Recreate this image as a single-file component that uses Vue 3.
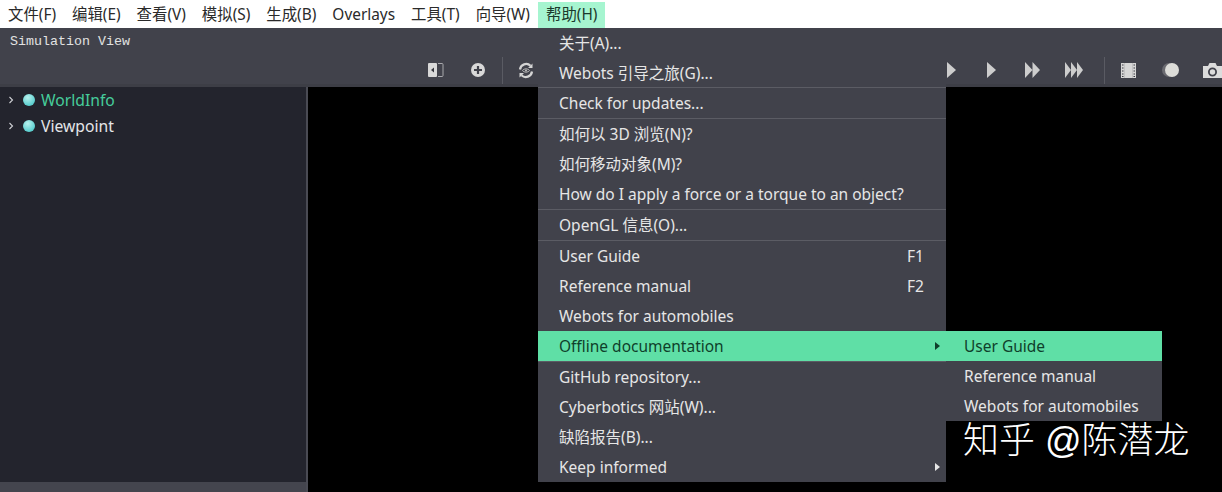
<script setup>
const menus = [
  { t: '文件(F)' }, { t: '编辑(E)' }, { t: '查看(V)' }, { t: '模拟(S)' }, { t: '生成(B)' },
  { t: 'Overlays' }, { t: '工具(T)' }, { t: '向导(W)' }, { t: '帮助(H)', active: true }
]
const groups = [
  [{ t: '关于(A)...' }, { t: 'Webots 引导之旅(G)...' }],
  [{ t: 'Check for updates...' }],
  [{ t: '如何以 3D 浏览(N)?' }, { t: '如何移动对象(M)?' }, { t: 'How do I apply a force or a torque to an object?' }],
  [{ t: 'OpenGL 信息(O)...' }],
  [
    { t: 'User Guide', k: 'F1' }, { t: 'Reference manual', k: 'F2' }, { t: 'Webots for automobiles' },
    { t: 'Offline documentation', sub: true, hl: true }
  ],
  [{ t: 'GitHub repository...' }, { t: 'Cyberbotics 网站(W)...' }, { t: '缺陷报告(B)...' }, { t: 'Keep informed', sub: true }]
]
const tree = [{ t: 'WorldInfo', on: true }, { t: 'Viewpoint' }]
const subs = [{ t: 'User Guide', hl: true }, { t: 'Reference manual' }, { t: 'Webots for automobiles' }]
</script>

<template>
  <div class="app">
    <nav class="menubar">
      <span v-for="m in menus" :key="m.t" class="mb" :class="{ active: m.active }">{{ m.t }}</span>
    </nav>
    <header class="head">
      <div class="title">Simulation View</div>
      <div class="tools">
        <svg class="ic i-panel" viewBox="0 0 16 16"><rect x="0" y="1" width="9" height="14" rx="1" fill="#d8d8d8"/><path d="M10 1.500h4a1 1 0 0 1 1 1v11a1 1 0 0 1-1 1h-4" fill="none" stroke="#a9a9ad" stroke-width="1"/><path d="M6 5.500L3 8l3 2.500z" fill="#33343b"/></svg>
        <svg class="ic i-plus" viewBox="0 0 14 14"><circle cx="7" cy="7" r="7" fill="#d8d8d8"/><path d="M7 3v8M3 7h8" stroke="#41424b" stroke-width="2.200"/></svg>
        <i class="div d-left"></i>
        <svg class="ic i-reload" viewBox="0 0 16 17"><path d="M2 7.500A6.200 6.200 0 0 1 12.500 3.800" fill="none" stroke="#d4d4d4" stroke-width="2.200"/><path d="M14 9.500A6.200 6.200 0 0 1 3.500 13.200" fill="none" stroke="#d4d4d4" stroke-width="2.200"/><path d="M14.500 1.500v4.500H10zM1.500 15.500V11H6z" fill="#d4d4d4"/><path d="M4.500 8.500C6 6.300 10 6.300 11.500 8.500 10 10.700 6 10.700 4.500 8.500z" fill="none" stroke="#b8b8b8" stroke-width="1"/><circle cx="8" cy="8.500" r="1.100" fill="#b8b8b8"/></svg>
        <svg class="ic i-p1" viewBox="0 0 9 16"><path d="M0 0l9 8-9 8z" fill="#cdcdcd"/></svg>
        <svg class="ic i-p2" viewBox="0 0 9 16"><path d="M0 0l9 8-9 8z" fill="#cdcdcd"/></svg>
        <svg class="ic i-p3" viewBox="0 0 15 16"><path d="M0 0l7.500 8V0L15 8l-7.500 8V8L0 16z" fill="#cdcdcd"/></svg>
        <svg class="ic i-p4" viewBox="0 0 18 16"><path d="M0 0l6 8V0l6 8V0l6 8-6 8V8l-6 8V8l-6 8z" fill="#cdcdcd"/></svg>
        <i class="div d-right"></i>
        <svg class="ic i-film" viewBox="0 0 15 15"><rect width="15" height="15" fill="#d6d6d6"/><path d="M1 2h1.500M1 5h1.500M1 8h1.500M1 11h1.500M1 13.500h1.500M12.500 2H14M12.500 5H14M12.500 8H14M12.500 11H14M12.500 13.500H14" stroke="#3a3b42" stroke-width="1.200"/><path d="M3.500 0v15M11.500 0v15" stroke="#b5b5b7" stroke-width="0.600"/></svg>
        <svg class="ic i-rec" viewBox="0 0 17 14"><circle cx="7" cy="7" r="7" fill="#6a6a70"/><circle cx="10" cy="7" r="7" fill="#dcdcd8"/></svg>
        <svg class="ic i-cam" viewBox="0 0 19 15"><path fill-rule="evenodd" d="M0 3h5l1.500-3h6L14 3h5v12H0zM9.500 4.500a4.500 4.500 0 1 0 0 9 4.500 4.500 0 0 0 0-9zM9.500 6.300a2.700 2.700 0 1 1 0 5.400 2.700 2.700 0 0 1 0-5.400z" fill="#dcdcdc"/></svg>
      </div>
    </header>
    <main class="body">
      <aside class="side">
        <div class="tree">
          <div v-for="n in tree" :key="n.t" class="node" :class="{ on: n.on }">
            <svg class="chev" viewBox="0 0 6 8"><path d="M1.500 1l3 3-3 3" fill="none" stroke="#cfd0d4" stroke-width="1.100"/></svg>
            <span class="dot"></span>
            <span>{{ n.t }}</span>
          </div>
        </div>
        <div class="hscroll"></div>
      </aside>
      <div class="split"></div>
      <div class="view"></div>
    </main>

    <div class="menu">
      <template v-for="(g, gi) in groups" :key="gi">
        <div v-if="gi" class="sep" :class="{ first: gi === 1 }"></div>
        <div v-for="r in g" :key="r.t" class="row" :class="{ hl: r.hl }">
          <span>{{ r.t }}</span>
          <span v-if="r.k" class="key">{{ r.k }}</span>
          <svg v-if="r.sub" class="arrow" viewBox="0 0 5 8"><path d="M0 0l5 4-5 4z" fill="currentColor"/></svg>
        </div>
      </template>
    </div>
    <div class="submenu">
      <div v-for="r in subs" :key="r.t" class="row sr" :class="{ hl: r.hl }"><span>{{ r.t }}</span></div>
    </div>
    <div class="mark">知乎 @陈潜龙</div>
  </div>
</template>

<style>
body { margin: 0; background: #000; }
</style>

<style scoped>
.app {
  position: relative; width: 1222px; height: 492px; overflow: hidden; background: #000;
  display: flex; flex-direction: column;
  font-family: "Noto Sans", "Noto Sans CJK SC", sans-serif; font-size: 15.5px;
}
.menubar { height: 28px; background: #fff; display: flex; align-items: flex-end; color: #2a2a2a; }
.mb { height: 26px; line-height: 26px; padding: 0 8px; white-space: nowrap; font-size: 15.4px; }
.mb.active { background: #a6f5d0; color: #1c3a2c; }
.head { height: 59px; background: #41424b; display: flex; flex-direction: column; box-shadow: inset 0 -3px 0 #3d3e46; }
.title { font-family: "Liberation Mono", monospace; font-size: 13.33px; color: #e2e2e2; padding: 6px 0 0 10px; line-height: 16px; height: 20px; }
.tools { flex: 1; display: flex; align-items: center; padding: 0 0 1px 428px; }
.ic { display: block; flex: none; }
.i-panel { width: 16px; height: 16px; }
.i-plus { width: 14px; height: 14px; margin-left: 27px; }
.div { display: block; flex: none; width: 1px; height: 27px; background: #5a5b63; }
.d-left { margin-left: 17px; }
.i-reload { width: 16px; height: 17px; margin-left: 15px; }
.i-p1 { width: 9px; height: 16px; margin-left: auto; }
.i-p2 { width: 9px; height: 16px; margin-left: 31px; }
.i-p3 { width: 15px; height: 16px; margin-left: 29px; }
.i-p4 { width: 18px; height: 16px; margin-left: 25px; }
.d-right { margin-left: 21px; }
.i-film { width: 15px; height: 15px; margin-left: 16px; }
.i-rec { width: 17px; height: 14px; margin-left: 26px; }
.i-cam { width: 19px; height: 15px; margin-left: 24px; }
.body { flex: 1; display: flex; min-height: 0; }
.side { width: 306px; display: flex; flex-direction: column; background: #23242d; }
.tree { flex: 1; }
.node { height: 26px; display: flex; align-items: center; color: #e4e5e8; font-size: 15.7px; padding-left: 8px; }
.node.on { color: #46cc9b; }
.chev { width: 6px; height: 8px; margin-right: 9px; }
.dot { width: 12px; height: 12px; border-radius: 50%; margin-right: 6px; background: radial-gradient(circle at 40% 30%, #b8f2ee, #5ccfcf 70%); }
.hscroll { height: 10px; background: #44454e; }
.split { width: 2px; background: #4a4b54; }
.view { flex: 1; background: #000; }
.menu { position: absolute; left: 538px; top: 28px; width: 408px; height: 454px; background: #41424b; color: #e6e6e6; }
.row { height: 30px; line-height: 20px; display: flex; align-items: center; padding: 0 22px 0 21px; white-space: nowrap; position: relative; }
.row .key { margin-left: auto; }
.row.hl { background: #5fdfa6; color: #0f3f2b; }
.sep { height: 1px; background: #5b5c64; }
.sep.first { margin-top: -1px; }
.arrow { position: absolute; right: 6px; top: 11px; width: 5px; height: 8px; }
.submenu { position: absolute; left: 946px; top: 331px; width: 216px; height: 90px; background: #41424b; color: #e6e6e6; }
.sr { padding: 0 18px; }
.mark { position: absolute; left: 963px; top: 422px; color: #fff; font-size: 36px; line-height: 38px; white-space: nowrap; font-family: "Liberation Sans", "Noto Sans CJK SC", sans-serif; font-weight: 300; }
</style>
